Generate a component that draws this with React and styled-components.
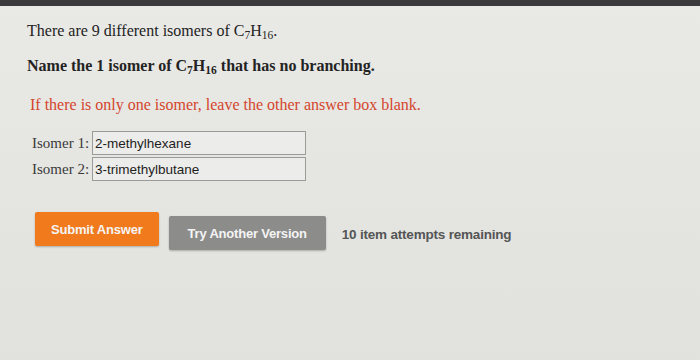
import React from "react";
import styled, { createGlobalStyle } from "styled-components";

const Global = createGlobalStyle`
  html, body { margin: 0; padding: 0; }
  body { width: 700px; height: 360px; overflow: hidden; background: #e4e4e1; }
`;

const Page = styled.div`
  width: 700px;
  height: 360px;
  box-sizing: border-box;
  border-top: 6px solid #3a3a3c;
  background: linear-gradient(180deg, #e9e9e6 0%, #e4e4e1 60%, #e1e1de 100%);
  padding: 14px 0 0 27px;
  font-family: "Liberation Serif", "Times New Roman", serif;
  color: #232323;
`;

const Para = styled.p`
  margin: 0 0 ${(p) => p.$mb || 0}px ${(p) => p.$ml || 0}px;
  font-size: 16px;
  line-height: 22px;
  font-weight: ${(p) => (p.$bold ? 700 : 400)};
  color: ${(p) => p.$color || "#232323"};
`;

const Sub = styled.sub`
  font-size: 11.5px;
  vertical-align: -3px;
  line-height: 0;
`;

const Fields = styled.div`
  display: flex;
  flex-direction: column;
  gap: 2px;
  margin-left: 5px;
`;

const FieldRow = styled.label`
  display: flex;
  align-items: center;
  gap: 3px;
  font-size: 15px;
  color: #3a3a3a;
`;

const Input = styled.input`
  width: 214px;
  height: 24px;
  box-sizing: border-box;
  border: 1px solid #9a9a98;
  background: #ececea;
  padding: 0 2px;
  font-family: "Liberation Sans", Arial, sans-serif;
  font-size: 13.5px;
  color: #1e1e1e;
  outline: none;
`;

const Actions = styled.div`
  display: flex;
  align-items: center;
  gap: 10px;
  margin: 27px 0 0 8px;
  font-family: "Liberation Sans", Arial, sans-serif;
`;

const Button = styled.button`
  height: 34px;
  padding: 0 ${(p) => p.$px}px;
  border: none;
  border-radius: 2px;
  background: ${(p) => p.$bg};
  color: #f4f4f4;
  font-family: "Liberation Sans", Arial, sans-serif;
  font-weight: 700;
  font-size: 13px;
  letter-spacing: -0.2px;
  margin-top: ${(p) => p.$mt || 0}px;
  box-shadow: 0 1px 2px rgba(0, 0, 0, 0.25);
`;

const Remaining = styled.span`
  margin: 10px 0 0 6px;
  font-size: 13.5px;
  font-weight: 700;
  color: #555;
  letter-spacing: -0.2px;
`;

export default function App() {
  return (
    <>
      <Global />
      <Page>
        <Para $mb={13}>
          There are 9 different isomers of C<Sub>7</Sub>H<Sub>16</Sub>.
        </Para>
        <Para $bold $mb={17}>
          Name the 1 isomer of C<Sub>7</Sub>H<Sub>16</Sub> that has no branching.
        </Para>
        <Para $color="#d4452c" $ml={3} $mb={15}>
          If there is only one isomer, leave the other answer box blank.
        </Para>
        <Fields>
          <FieldRow>
            Isomer 1: <Input defaultValue="2-methylhexane" />
          </FieldRow>
          <FieldRow>
            Isomer 2: <Input defaultValue="3-trimethylbutane" />
          </FieldRow>
        </Fields>
        <Actions>
          <Button $bg="#f07a1c" $px={16}>Submit Answer</Button>
          <Button $bg="#8c8c8b" $px={19} $mt={8}>Try Another Version</Button>
          <Remaining>10 item attempts remaining</Remaining>
        </Actions>
      </Page>
    </>
  );
}
